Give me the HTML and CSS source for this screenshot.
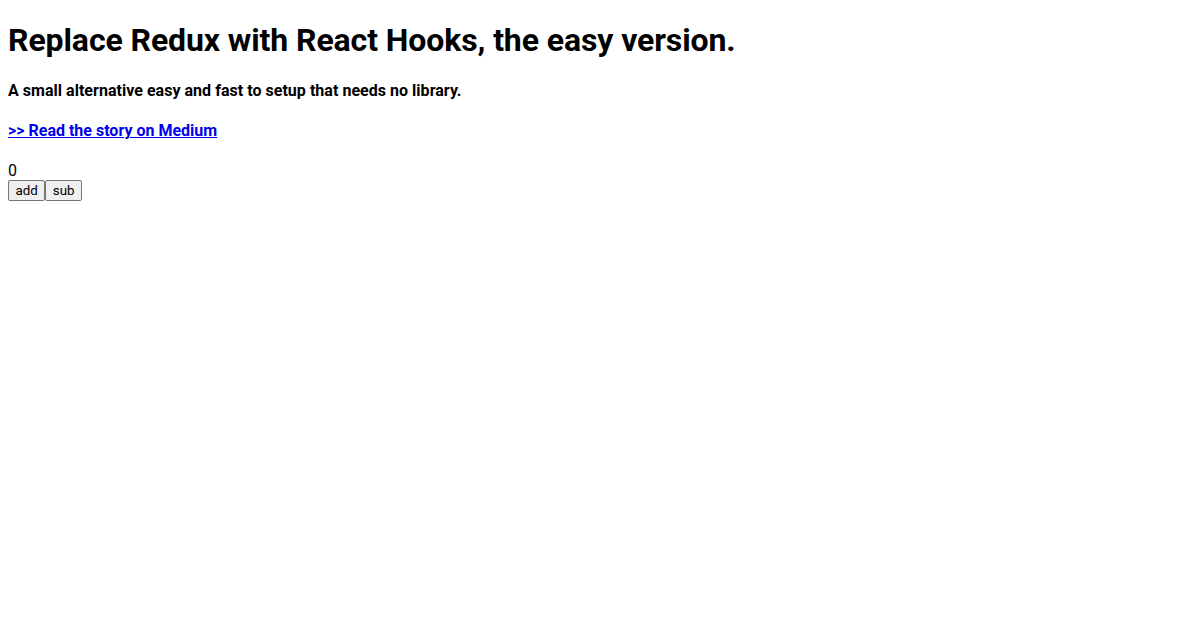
FILE: index.html
```html
<!DOCTYPE html>
<html>
<head>
<meta charset="utf-8">
<link rel="stylesheet" href="styles.css">
</head>
<body>
<h1 class="title">Replace Redux with React Hooks, the easy version.</h1>
<h4 class="subtitle">A small alternative easy and fast to setup that needs no library.</h4>
<h4 class="subtitle"><a class="story" href="#">&gt;&gt; Read the story on Medium</a></h4>
<div class="counter">
  <div class="count">0</div>
  <div class="actions"><button class="btn">add</button><button class="btn">sub</button></div>
</div>
</body>
</html>
```
FILE: styles.css
```css
body {
  margin: 0 8px;
  padding-top: 0.1px;
  font-family: Roboto, "Liberation Sans", sans-serif;
  color: #000;
  background: #fff;
}
.title {
  font-size: 32px;
  font-weight: 700;
  letter-spacing: -0.1px;
  margin: 21.34px 0 21.44px;
}
.subtitle {
  font-size: 16px;
  font-weight: 700;
  letter-spacing: 0.03px;
  margin: 21.28px 0;
}
.story {
  color: #0000ee;
  text-decoration: underline;
  letter-spacing: 0;
}
.count {
  font-size: 16px;
}
.actions {
  display: flex;
}
.btn {
  font-family: Roboto, "Liberation Sans", sans-serif;
  font-size: 13.333px;
  padding: 2px 6.5px;
  border: 1px solid #767676;
  border-radius: 2px;
  background: #efefef;
  color: #000;
  margin: 0;
}
```
